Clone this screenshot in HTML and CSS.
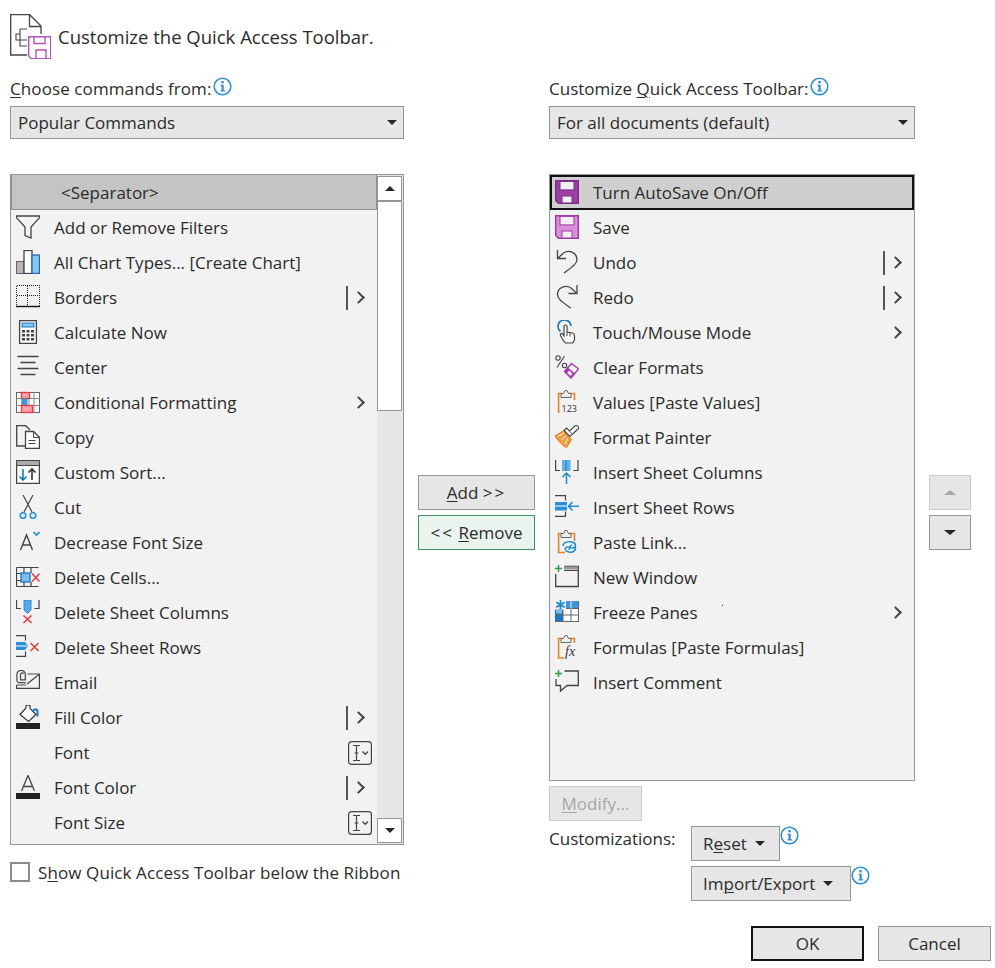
FILE: index.html
```html
<!DOCTYPE html>
<html lang="en">
<head>
<meta charset="utf-8">
<title>Customize the Quick Access Toolbar</title>
<link rel="stylesheet" href="styles.css">
</head>
<body>
<svg class="sprite" aria-hidden="true">
  <symbol id="info" viewBox="0 0 19 19"><circle cx="9.5" cy="9.5" r="8.3" fill="#fff" stroke="#2b8ed6" stroke-width="1.5"/><rect x="8.3" y="4" width="2.4" height="2.4" fill="#2b8ed6"/><path d="M7.5 7.8h3.2v5.4h1.3v1.3H7.5v-1.3h1V9.1h-1z" fill="#2b8ed6"/></symbol>
  <symbol id="filter" viewBox="0 0 24 24"><path d="M.5 1h23v1.6L15 12v11l-6-2.5V12L.5 2.6z" fill="none" stroke="#444" stroke-width="1.3"/></symbol>
  <symbol id="chart" viewBox="0 0 24 24"><rect x=".5" y="11.5" width="7.5" height="12" fill="#b8b8b8" stroke="#666"/><rect x="8" y=".5" width="8" height="23" fill="#fff" stroke="#444" stroke-width="1.3"/><rect x="16" y="5" width="7.5" height="18.5" fill="#8cc4f0" stroke="#1a6fb8" stroke-width="1.3"/></symbol>
  <symbol id="borders" viewBox="0 0 24 24"><path d="M.5.5h23v20M.5.5v20M11.500 .5v20M.5 10.500h23" fill="none" stroke="#222" stroke-dasharray="1 1" shape-rendering="crispEdges"/><path d="M0 21.500h24" stroke="#111" stroke-width="1.400"/></symbol>
  <symbol id="calc" viewBox="0 0 24 24"><rect x="3.6" y=".6" width="16.8" height="22.8" fill="#fff" stroke="#444" stroke-width="1.3"/><rect x="6" y="3" width="12" height="4" fill="#8cc4f0" stroke="#1a78c2"/><path d="M6 10h3v2.5H6zm4.5 0h3v2.5h-3zm4.5 0h3v2.5h-3zM6 14h3v2.5H6zm4.5 0h3v2.5h-3zm4.5 0h3v2.5h-3zM6 18h3v2.5H6zm4.5 0h3v2.5h-3zm4.5 0h3v2.5h-3z" fill="#444"/></symbol>
  <symbol id="center" viewBox="0 0 24 24"><path d="M1.5 1.5h21M4.5 7.5h15M1.5 13.5h21M4.5 19.5h15" stroke="#444" stroke-width="1.3"/></symbol>
  <symbol id="cf" viewBox="0 0 24 24"><rect x=".5" y="2.5" width="23" height="20" fill="#fff" stroke="#666"/><path d="M6 2v21M13 2v21M18 2v21M0 8.5h24M0 15.5h24" stroke="#888"/><rect x="5.5" y="2.5" width="8" height="6" fill="#f9a3a8" stroke="#e8393f" stroke-width="1.3"/><rect x="5.5" y="8.5" width="6" height="7" fill="#3a96dd"/><rect x="5.5" y="15.5" width="11" height="7" fill="#f9a3a8" stroke="#e8393f" stroke-width="1.3"/></symbol>
  <symbol id="copy" viewBox="0 0 24 24"><path d="M9 21H.7V.7h9L14 5" fill="none" stroke="#444" stroke-width="1.3"/><path d="M9.5 6.5h8l6 6v11h-14z" fill="#fff" stroke="#444" stroke-width="1.3"/><path d="M17.5 6.5v6h6M12.500 15.500h7M12.500 18.500h7" fill="none" stroke="#444"/></symbol>
  <symbol id="sort" viewBox="0 0 24 24"><rect x=".6" y=".6" width="22.800" height="22.800" fill="#fff" stroke="#444" stroke-width="1.3"/><rect x="1" y="1" width="22" height="4" fill="#aaa"/><path d="M1 5.500h22" stroke="#444"/><path d="M7 9v11M3.500 16.500 7 20l3.500-3.500" fill="none" stroke="#1a78c2" stroke-width="1.6"/><path d="M16 20V9M12.500 12.500 16 9l3.500 3.500" fill="none" stroke="#333" stroke-width="1.6"/></symbol>
  <symbol id="cut" viewBox="0 0 24 24"><path d="M7 0l9 17M17 0 8 17" fill="none" stroke="#444" stroke-width="1.2"/><circle cx="7" cy="20.500" r="2.800" fill="none" stroke="#2b8ed6" stroke-width="1.5"/><circle cx="17" cy="20.500" r="2.800" fill="none" stroke="#2b8ed6" stroke-width="1.5"/></symbol>
  <symbol id="decrease" viewBox="0 0 24 24"><path d="M4.500 20 10.500 5l6 15M6.500 15h8" fill="none" stroke="#444" stroke-width="1.4"/><path d="M17.500 2l3 3 3-3" fill="none" stroke="#1a8ad8" stroke-width="1.6"/></symbol>
  <symbol id="delcells" viewBox="0 0 24 24"><path d="M.5 2.500h22M.5 21.500h22M.5 2.500v19M8 3v5M15 3v5M8 17v4M15 17v4M.500 8.500H5M.500 15.500H5" fill="none" stroke="#444" stroke-width="1.2"/><rect x="5" y="8" width="9" height="9" fill="#7cbcee" stroke="#1a78c2" stroke-width="1.3"/><path d="M16 8.500l7.500 8M23.500 8.500l-7.500 8" stroke="#e8393f" stroke-width="1.5"/></symbol>
  <symbol id="delcol" viewBox="0 0 24 24"><path d="M.5 0v8.500H5M23 0v8.500h-4.500" fill="none" stroke="#444" stroke-width="1.2"/><path d="M8 0h7v10l-3.500 3.500L8 10z" fill="#5aaae8" stroke="#1a78c2" stroke-width=".8"/><path d="M7.500 15.500l8 7.500M15.500 15.500l-8 7.500" stroke="#e8393f" stroke-width="1.5"/></symbol>
  <symbol id="delrow" viewBox="0 0 24 24"><path d="M0 .6h9.500v4.900M0 21.400h9.500v-5" fill="none" stroke="#444" stroke-width="1.2"/><path d="M0 7h9l3 4-3 4H0z" fill="#2b8ed6"/><path d="M0 11h11" stroke="#fff"/><path d="M14.500 8l8 8M22.500 8l-8 8" stroke="#e8393f" stroke-width="1.5"/></symbol>
  <symbol id="email" viewBox="0 0 24 24"><path d="M11.500 4h11.900v14.400H.6V15" fill="none" stroke="#444" stroke-width="1.2"/><path d="M11 14 23 4.500M.6 15H10" fill="none" stroke="#444" stroke-width="1.2"/><path d="M9.800 12.600H3.200A2.300 2.300 0 0 1 .9 10.300V4.500a4.200 4.200 0 0 1 8.400 0v5.300H4.500V4.800a1.900 1.900 0 0 1 3.200-1.300" fill="none" stroke="#444" stroke-width="1.200"/></symbol>
  <symbol id="fill" viewBox="0 0 24 24"><path d="M4 9.500 10 3V.8c1-1 3-1 4 0v2.500L20 9.500 12.500 16.500z" fill="#fff" stroke="#333" stroke-width="1.200"/><path d="M16.500 6.500c1.500-3 5-3.500 5 .5v4.500" fill="none" stroke="#1a78c2" stroke-width="2"/><rect y="18" width="24" height="6" fill="#222"/></symbol>
  <symbol id="fontcolor" viewBox="0 0 24 24"><path d="M5.500 16 12 0.500 18.500 16M7.500 11.500h9" fill="none" stroke="#444" stroke-width="1.3"/><rect y="18" width="24" height="6" fill="#222"/></symbol>
  <symbol id="combo" viewBox="0 0 24 24"><rect x=".6" y=".6" width="22.800" height="22.800" rx="3" fill="none" stroke="#444" stroke-width="1.2"/><path d="M5 4.500h3.500M12 4.500H8.500M5 19.500h3.500M12 19.500H8.500M8.500 4.500v15M6.500 12h4" fill="none" stroke="#444" stroke-width="1.2"/><path d="M14.500 10.500l2.800 2.800 2.800-2.800" fill="none" stroke="#444" stroke-width="1.3"/></symbol>
  <symbol id="floppy" viewBox="0 0 24 24"><path d="M.7.700h22.600v22.600H3.500L.7 20.500z" fill="#d88fdd" stroke="#9b3aa3" stroke-width="1.4"/><rect x="5" y="1.400" width="14" height="8.500" fill="#f5edf6" stroke="#9b3aa3"/><rect x="7" y="16" width="10" height="7" fill="#f5edf6" stroke="#9b3aa3"/></symbol>
  <symbol id="floppydark" viewBox="0 0 24 24"><path d="M.7.700h22.600v22.600H3.500L.7 20.500z" fill="#9c3fa6" stroke="#7d2b87" stroke-width="1.4"/><rect x="5" y="1.400" width="14" height="8.500" fill="#eef1f0" stroke="#7d2b87"/><rect x="7" y="16" width="10" height="7" fill="#eef1f0" stroke="#7d2b87"/></symbol>
  <symbol id="undo" viewBox="0 0 24 24"><path d="M2.500 0v8.500H11" fill="none" stroke="#444" stroke-width="1.3"/><path d="M2.800 8.200 8.500 3C14 -.5 22 2.500 22 9.500c0 4-3 6-13 13.500" fill="none" stroke="#444" stroke-width="1.3"/></symbol>
  <symbol id="redo" viewBox="0 0 24 24"><g transform="matrix(-1 0 0 1 24 0)"><path d="M2 0v8.500H10.500" fill="none" stroke="#444" stroke-width="1.3"/><path d="M2.300 8.200 8 3C13.500 -.5 21.500 2.500 21.500 9.500c0 4-3 6-13 13.500" fill="none" stroke="#444" stroke-width="1.3"/></g></symbol>
  <symbol id="touch" viewBox="0 0 24 24"><path d="M5.500 11.500A6.500 6.500 0 1 1 16 6" fill="none" stroke="#1a78c2" stroke-width="1.6"/><path d="M9 21.500 5.500 15.500c-.8-1.600 1-2.600 2-1.500l1.500 2V6.500a1.500 1.500 0 0 1 3 0V12l5.500 1c1.500.3 2 1.200 2 2.500v4c0 1.500-.8 2-2 3.500H10.500z" fill="#fff" stroke="#444" stroke-width="1.2"/><path d="M12 12v4M15 12.500v4" stroke="#444"/></symbol>
  <symbol id="clear" viewBox="0 0 24 24"><path d="M9.500 1 2 12.500" stroke="#444" stroke-width="1.1"/><circle cx="3" cy="3" r="2.200" fill="none" stroke="#444" stroke-width="1.1"/><circle cx="9.500" cy="10.500" r="2.200" fill="none" stroke="#444" stroke-width="1.1"/><path d="M16.500 8.500 23.500 14l-7.500 9-6.500-6.500z" fill="#fff" stroke="#a43cae" stroke-width="1.500"/><path d="M9.500 16.500l3.500-4 7 6-4 4.500z" fill="#a43cae"/><path d="M12 18l2-2.500 3.500 3-2 2.500z" fill="#f3e3f5"/></symbol>
  <symbol id="painter" viewBox="0 0 24 24"><path d="M0 11 8 6l8.500 8.500-5 8C8 21 4 17 0 11z" fill="#f29b3a" stroke="#e07a10"/><path d="M2.500 11.500 9 8M6 15l5-4M10 19l3-6" stroke="#fff"/><path d="M9 5.500 11.500 3 17.500 9 15 11.500z" fill="#fff" stroke="#444" stroke-width="1.100"/><path d="M14.500 6 20 .8c1-.8 2-.3 3 .6.800.900.800 1.700 0 2.600L17.500 9" fill="#fff" stroke="#444" stroke-width="1.100"/></symbol>
  <symbol id="inscol" viewBox="0 0 24 24"><path d="M.6 0v10.500H5M23 0v10.500h-4.500" fill="none" stroke="#444" stroke-width="1.2"/><rect x="7" y="0" width="8.500" height="11" fill="#62b0ea"/><path d="M11 0v11" stroke="#1a78c2"/><path d="M11.500 24V13.500M7.500 17l4-4 4 4" fill="none" stroke="#1a8ad8" stroke-width="1.500"/></symbol>
  <symbol id="insrow" viewBox="0 0 24 24"><path d="M0 .6h10.500v4.900M0 21.400h10.500v-5" fill="none" stroke="#444" stroke-width="1.2"/><rect x="0" y="7" width="12" height="8.500" fill="#2b8ed6"/><path d="M0 11h12" stroke="#fff"/><path d="M24 11.200H13.500M17.500 7l-4 4.200 4 4.200" fill="none" stroke="#1a8ad8" stroke-width="1.500"/></symbol>
  <symbol id="pastelink" viewBox="0 0 24 24"><path d="M7 3.500H3.600V22.500H10M14 3.500h5.500V11" fill="none" stroke="#e8821e" stroke-width="1.6"/><path d="M6 7.500V3.500h2.500l1.500-3h2l1.500 3H16v4z" fill="#eee" stroke="#666"/><path d="M8 16c0-4 6-5 9-4 4 1 5 5 1 6-3 .5-4-2-1-3M20 16c2 4-2 7-6 6-4-.5-5-4-2-5 3-.5 3.500 2 1.500 2.500" fill="none" stroke="#1a8ad8" stroke-width="1.400"/></symbol>
  <symbol id="newwin" viewBox="0 0 24 24"><path d="M3.500 0v7M0 3.500h7" stroke="#2aa04a" stroke-width="1.500"/><path d="M.7 9v12.500h22.600V1.500H9" fill="none" stroke="#444" stroke-width="1.300"/><rect x="9" y="1.500" width="14" height="3" fill="#999"/><path d="M9 5.500h14" stroke="#444"/></symbol>
  <symbol id="freeze" viewBox="0 0 24 24"><rect x="0.500" y="1" width="23" height="21" fill="#fff"/><rect x="8" y="1" width="15.500" height="7.500" fill="#3a96dd"/><rect x="0" y="8.500" width="8" height="13.500" fill="#1a78c2"/><rect x="1" y="9.500" width="6" height="4" fill="#7cbcee"/><path d="M0 15h24M16 1v21M8 8.500v13.500M0 8.500h24M0 21.500h24M23.500 1v21" stroke="#666"/><path d="M16 1v7.500" stroke="#fff"/><rect x="0" y="0" width="11" height="9.500" fill="#f2f2f2"/><path d="M5.500 0v9.500M1.300 2.200l8.400 5M9.700 2.200l-8.400 5" stroke="#1a8ad8" stroke-width="1.700"/></symbol>
  <symbol id="comment" viewBox="0 0 24 24"><path d="M3.500 0v7M0 3.500h7" stroke="#2aa04a" stroke-width="1.500"/><path d="M9.500 1h13.800v14.500H12L5.500 21v-5.500H1V9" fill="none" stroke="#444" stroke-width="1.300"/></symbol>
</svg>

<main class="dialog">
  <header class="head">
    <svg class="head-icon" viewBox="0 0 41 45" aria-hidden="true">
      <path d="M17 41H.7V.7h19L31 12v8" fill="none" stroke="#444" stroke-width="1.300"/>
      <path d="M19.500 1v11.500H31" fill="none" stroke="#444" stroke-width="1.300"/>
      <path d="M17 15H10v5H6v6h4v6h7M10 20v6h7" fill="none" stroke="#444" stroke-width="1.100"/>
      <path d="M18.700 22.700h22v22H21.500l-2.800-2.800z" fill="#fff" stroke="#b452bc" stroke-width="1.400"/>
      <path d="M24 23v6.500h11V23M26 44v-8h10v8" fill="none" stroke="#b452bc" stroke-width="1.400"/>
    </svg>
    <h1 class="title">Customize the Quick Access Toolbar.</h1>
  </header>

  <div class="columns">
    <section class="col-left">
      <div class="label-row"><span class="label label-choose"><u>C</u>hoose commands from:</span><svg class="info"><use href="#info"/></svg></div>
      <div class="select"><span>Popular Commands</span><i class="tri-down"></i></div>
      <div class="listbox listbox-left">
        <ul class="rows">
          <li class="row row-sep">&lt;Separator&gt;</li>
          <li class="row"><svg class="ic"><use href="#filter"/></svg><span>Add or Remove Filters</span></li>
          <li class="row"><svg class="ic"><use href="#chart"/></svg><span>All Chart Types... [Create Chart]</span></li>
          <li class="row"><svg class="ic"><use href="#borders"/></svg><span>Borders</span><i class="split"></i><i class="chev"></i></li>
          <li class="row"><svg class="ic"><use href="#calc"/></svg><span>Calculate Now</span></li>
          <li class="row"><svg class="ic"><use href="#center"/></svg><span>Center</span></li>
          <li class="row"><svg class="ic"><use href="#cf"/></svg><span>Conditional Formatting</span><i class="chev"></i></li>
          <li class="row"><svg class="ic"><use href="#copy"/></svg><span>Copy</span></li>
          <li class="row"><svg class="ic"><use href="#sort"/></svg><span>Custom Sort...</span></li>
          <li class="row"><svg class="ic"><use href="#cut"/></svg><span>Cut</span></li>
          <li class="row"><svg class="ic"><use href="#decrease"/></svg><span>Decrease Font Size</span></li>
          <li class="row"><svg class="ic"><use href="#delcells"/></svg><span>Delete Cells...</span></li>
          <li class="row"><svg class="ic"><use href="#delcol"/></svg><span>Delete Sheet Columns</span></li>
          <li class="row"><svg class="ic"><use href="#delrow"/></svg><span>Delete Sheet Rows</span></li>
          <li class="row"><svg class="ic"><use href="#email"/></svg><span>Email</span></li>
          <li class="row"><svg class="ic"><use href="#fill"/></svg><span>Fill Color</span><i class="split"></i><i class="chev"></i></li>
          <li class="row"><i class="ic"></i><span>Font</span><svg class="combo"><use href="#combo"/></svg></li>
          <li class="row"><svg class="ic"><use href="#fontcolor"/></svg><span>Font Color</span><i class="split"></i><i class="chev"></i></li>
          <li class="row"><i class="ic"></i><span>Font Size</span><svg class="combo"><use href="#combo"/></svg></li>
        </ul>
        <div class="scrollbar">
          <div class="sb-btn"><i class="tri-up"></i></div>
          <div class="sb-thumb"></div>
          <div class="sb-track"></div>
          <div class="sb-btn"><i class="tri-down"></i></div>
        </div>
      </div>
      <label class="check"><i class="box"></i><span>S<u>h</u>ow Quick Access Toolbar below the Ribbon</span></label>
    </section>

    <section class="col-mid">
      <button class="btn btn-wide"><span><u>A</u>dd <span class="gg">&gt;&gt;</span></span></button>
      <button class="btn btn-wide btn-green"><span><span class="gg">&lt;&lt;</span> <u>R</u>emove</span></button>
    </section>

    <section class="col-right">
      <div class="label-row"><span class="label">Customize <u>Q</u>uick Access Toolbar:</span><svg class="info info-tight"><use href="#info"/></svg></div>
      <div class="select"><span>For all documents (default)</span><i class="tri-down"></i></div>
      <div class="listbox listbox-right">
        <ul class="rows">
          <li class="row row-current"><svg class="ic"><use href="#floppydark"/></svg><span>Turn AutoSave On/Off</span></li>
          <li class="row"><svg class="ic"><use href="#floppy"/></svg><span>Save</span></li>
          <li class="row"><svg class="ic"><use href="#undo"/></svg><span>Undo</span><i class="split"></i><i class="chev"></i></li>
          <li class="row"><svg class="ic"><use href="#redo"/></svg><span>Redo</span><i class="split"></i><i class="chev"></i></li>
          <li class="row"><svg class="ic"><use href="#touch"/></svg><span>Touch/Mouse Mode</span><i class="chev"></i></li>
          <li class="row"><svg class="ic"><use href="#clear"/></svg><span>Clear Formats</span></li>
          <li class="row"><svg class="ic" viewBox="0 0 24 24"><path d="M7 3.500H3.600V23M14 3.500h5.500V10" fill="none" stroke="#e8821e" stroke-width="1.6"/><path d="M6 7.500V3.500h2.500l1.500-3h2l1.500 3H16v4z" fill="#eee" stroke="#666"/><text x="6.500" y="22" class="svg-num">123</text></svg><span>Values [Paste Values]</span></li>
          <li class="row"><svg class="ic"><use href="#painter"/></svg><span>Format Painter</span></li>
          <li class="row"><svg class="ic"><use href="#inscol"/></svg><span>Insert Sheet Columns</span></li>
          <li class="row"><svg class="ic"><use href="#insrow"/></svg><span>Insert Sheet Rows</span></li>
          <li class="row"><svg class="ic"><use href="#pastelink"/></svg><span>Paste Link...</span></li>
          <li class="row"><svg class="ic"><use href="#newwin"/></svg><span>New Window</span></li>
          <li class="row"><svg class="ic"><use href="#freeze"/></svg><span>Freeze Panes</span><i class="speck"></i><i class="chev"></i></li>
          <li class="row"><svg class="ic" viewBox="0 0 24 24"><path d="M7 3.500H3.600V23H9M14 3.500h5.500V8" fill="none" stroke="#e8821e" stroke-width="1.6"/><path d="M6 7.500V3.500h2.500l1.500-3h2l1.500 3H16v4z" fill="#eee" stroke="#666"/><text x="10" y="21" class="svg-fx">fx</text></svg><span>Formulas [Paste Formulas]</span></li>
          <li class="row"><svg class="ic"><use href="#comment"/></svg><span>Insert Comment</span></li>
        </ul>
      </div>
      <button class="btn btn-modify" disabled><span><u>M</u>odify...</span></button>
      <div class="custom">
        <span class="custom-label">Customizations:</span>
        <div class="custom-btns">
          <div class="custom-line"><button class="btn btn-menu btn-reset"><span>R<u>e</u>set</span><i class="tri-down"></i></button><svg class="info"><use href="#info"/></svg></div>
          <div class="custom-line"><button class="btn btn-menu btn-import"><span>Im<u>p</u>ort/Export</span><i class="tri-down"></i></button><svg class="info"><use href="#info"/></svg></div>
        </div>
      </div>
    </section>

    <section class="col-move">
      <button class="btn btn-move" disabled><i class="tri-up tri-big"></i></button>
      <button class="btn btn-move"><i class="tri-down tri-big"></i></button>
    </section>
  </div>

  <footer class="foot">
    <button class="btn btn-foot btn-default">OK</button>
    <button class="btn btn-foot">Cancel</button>
  </footer>
</main>
</body>
</html>
```

FILE: styles.css
```css
* { box-sizing: border-box; }
html, body { margin: 0; padding: 0; background: #fff; }
body {
  width: 995px;
  height: 968px;
  overflow: hidden;
  font-family: "Open Sans", "Noto Sans", sans-serif;
  font-size: 17px;
  color: #2b2b2b;
}
.sprite { position: absolute; width: 0; height: 0; }
.svg-num { font: 400 9px "Open Sans", sans-serif; fill: #333; }
.svg-fx { font: italic 14px "Liberation Serif", serif; fill: #333; }
u { text-underline-offset: 2px; text-decoration-thickness: 1px; }
.gg { letter-spacing: 2px; }

.dialog { padding: 14px 4px 0 10px; width: 995px; }

.head { display: flex; align-items: center; height: 45px; gap: 7px; }
.head-icon { width: 41px; height: 45px; flex: none; }
.title { margin: 0; font-size: 18.500px; font-weight: 400; line-height: 45px; }

.columns { display: flex; margin-top: 18px; }
.col-left { width: 394px; flex: none; }
.col-mid { width: 145px; flex: none; padding: 398px 14px 0; display: flex; flex-direction: column; gap: 5px; }
.col-right { width: 366px; flex: none; }
.col-move { width: 42px; flex: none; margin-left: 14px; padding-top: 398px; display: flex; flex-direction: column; gap: 5px; }

.label-row { display: flex; height: 29px; align-items: flex-start; }
.label { line-height: 24px; }
.label-choose { letter-spacing: .1px; }
.info { width: 19px; height: 19px; flex: none; margin-left: 1px; }
.info-tight { margin-left: 1px; }

.select {
  height: 33px;
  background: #e6e6e6;
  border: 1px solid #969696;
  display: flex;
  align-items: center;
  justify-content: space-between;
  padding: 0 6px 0 7px;
}
.tri-down, .tri-up { display: block; flex: none; width: 0; height: 0; border-left: 5.500px solid transparent; border-right: 5.500px solid transparent; }
.tri-down { border-top: 5.500px solid #262626; }
.tri-up { border-bottom: 5.500px solid #262626; }
.tri-big { border-left-width: 6px; border-right-width: 6px; }

.listbox { margin-top: 35px; border: 1px solid #969696; background: #f2f2f2; display: flex; }
.listbox-left { height: 671px; }
.listbox-right { height: 607px; }
.rows { list-style: none; margin: 0; padding: 0; flex: 1; min-width: 0; }
.row { height: 35px; display: flex; align-items: center; padding: 0 11px 0 5px; white-space: nowrap; }
.row > span { line-height: 35px; }
.ic { width: 24px; height: 24px; flex: none; display: block; margin-right: 14px; align-self: flex-start; margin-top: 5px; }
.row-sep { background: #c4c4c4; border: 1px solid #8f8f8f; border-top: 0; padding-left: 49px; }
.row-current { background: #cfcfcf; box-shadow: inset 0 0 0 2px #111; }

.split { display: block; width: 2px; height: 24px; background: #555; margin-left: auto; margin-right: 6px; }
.chev { display: block; width: 9px; height: 9px; border-top: 2px solid #444; border-right: 2px solid #444; transform: rotate(45deg); margin-right: 3px; flex: none; }
.split + .chev { margin-left: 0; }
.row > span + .chev { margin-left: auto; }
.speck { display: block; width: 1px; height: 1px; background: #333; position: relative; left: 24px; top: -7px; }
.speck + .chev { margin-left: auto; }
.combo { width: 24px; height: 24px; margin-left: auto; margin-right: -6px; flex: none; }

.scrollbar { width: 26px; flex: none; background: #e6e6e6; display: flex; flex-direction: column; padding: 1px 1px 1px 0; }
.sb-btn { height: 25px; flex: none; background: #fff; border: 1px solid #969696; display: flex; align-items: center; justify-content: center; }
.sb-thumb { height: 210px; flex: none; background: #fff; border: 1px solid #969696; }
.sb-track { flex: 1; }

.check { display: flex; align-items: center; height: 20px; margin-top: 17px; letter-spacing: .1px; }
.box { width: 20px; height: 20px; border: 2px solid #8c8c8c; background: #fff; margin-right: 8px; flex: none; }

.btn {
  font: inherit;
  color: inherit;
  background: #e6e6e6;
  border: 1px solid #969696;
  padding: 0;
  margin: 0;
  display: flex;
  align-items: center;
  justify-content: center;
}
.btn-wide { width: 117px; height: 35px; }
.btn-green { background: #e9f4ee; border-color: #3f9264; }
.btn-modify { width: 93px; height: 35px; margin-top: 5px; background: #e6e6e6; border-color: #ccc; color: #a6a6a6; }
.custom { display: flex; margin-top: 5px; }
.custom-label { width: 142px; flex: none; line-height: 25px; }
.custom-btns { display: flex; flex-direction: column; gap: 5px; }
.custom-line { display: flex; align-items: flex-start; }
.custom-line .info { margin-left: 0; }
.btn-menu { height: 35px; justify-content: flex-start; padding-left: 11px; gap: 8px; }
.btn-reset { width: 89px; }
.btn-import { width: 160px; }
.btn-move { width: 42px; height: 35px; }
.btn-move:disabled { border-color: #ccc; }
.btn-move:disabled .tri-up { border-bottom-color: #a8a8a8; }

.foot { display: flex; justify-content: flex-end; gap: 14px; margin-top: 25px; }
.btn-foot { width: 113px; height: 35px; }
.btn-default { border: 2px solid #111; }
```
